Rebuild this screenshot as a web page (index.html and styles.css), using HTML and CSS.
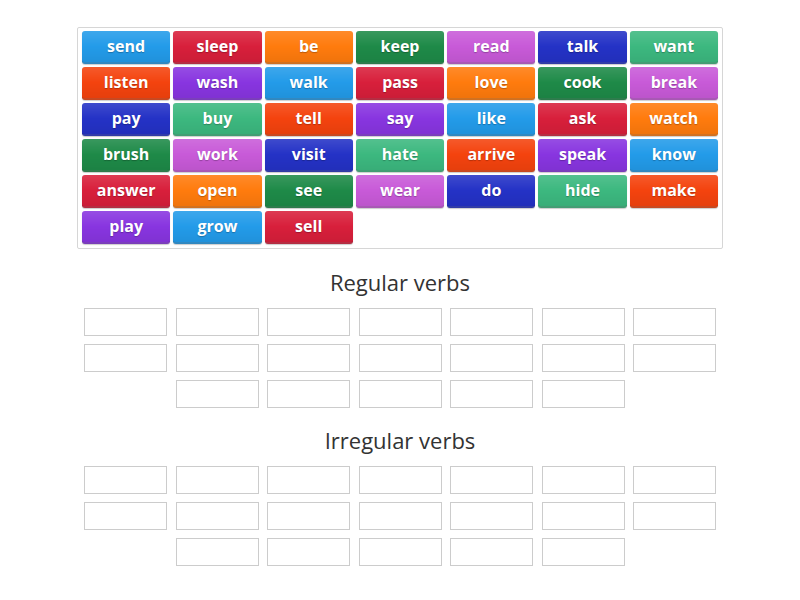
FILE: index.html
```html
<!DOCTYPE html>
<html>
<head>
<meta charset="utf-8">
<link rel="stylesheet" href="styles.css">
</head>
<body>
<div class="page">
  <div class="bank">
    <div class="tile c-blue">send</div>
    <div class="tile c-red">sleep</div>
    <div class="tile c-orange">be</div>
    <div class="tile c-green">keep</div>
    <div class="tile c-pink">read</div>
    <div class="tile c-navy">talk</div>
    <div class="tile c-teal">want</div>

    <div class="tile c-vermil">listen</div>
    <div class="tile c-purple">wash</div>
    <div class="tile c-blue">walk</div>
    <div class="tile c-red">pass</div>
    <div class="tile c-orange">love</div>
    <div class="tile c-green">cook</div>
    <div class="tile c-pink">break</div>

    <div class="tile c-navy">pay</div>
    <div class="tile c-teal">buy</div>
    <div class="tile c-vermil">tell</div>
    <div class="tile c-purple">say</div>
    <div class="tile c-blue">like</div>
    <div class="tile c-red">ask</div>
    <div class="tile c-orange">watch</div>

    <div class="tile c-green">brush</div>
    <div class="tile c-pink">work</div>
    <div class="tile c-navy">visit</div>
    <div class="tile c-teal">hate</div>
    <div class="tile c-vermil">arrive</div>
    <div class="tile c-purple">speak</div>
    <div class="tile c-blue">know</div>

    <div class="tile c-red">answer</div>
    <div class="tile c-orange">open</div>
    <div class="tile c-green">see</div>
    <div class="tile c-pink">wear</div>
    <div class="tile c-navy">do</div>
    <div class="tile c-teal">hide</div>
    <div class="tile c-vermil">make</div>

    <div class="tile c-purple">play</div>
    <div class="tile c-blue">grow</div>
    <div class="tile c-red">sell</div>
  </div>

  <div class="group group-first">
    <h2 class="group-title">Regular verbs</h2>
    <div class="slots">
      <div class="slot"></div><div class="slot"></div><div class="slot"></div><div class="slot"></div><div class="slot"></div><div class="slot"></div><div class="slot"></div>
      <div class="slot"></div><div class="slot"></div><div class="slot"></div><div class="slot"></div><div class="slot"></div><div class="slot"></div><div class="slot"></div>
      <div class="slot"></div><div class="slot"></div><div class="slot"></div><div class="slot"></div><div class="slot"></div>
    </div>
  </div>

  <div class="group">
    <h2 class="group-title">Irregular verbs</h2>
    <div class="slots">
      <div class="slot"></div><div class="slot"></div><div class="slot"></div><div class="slot"></div><div class="slot"></div><div class="slot"></div><div class="slot"></div>
      <div class="slot"></div><div class="slot"></div><div class="slot"></div><div class="slot"></div><div class="slot"></div><div class="slot"></div><div class="slot"></div>
      <div class="slot"></div><div class="slot"></div><div class="slot"></div><div class="slot"></div><div class="slot"></div>
    </div>
  </div>
</div>
</body>
</html>
```

FILE: styles.css
```css
html, body {
  margin: 0;
  padding: 0;
  background: #ffffff;
}

body {
  font-family: "Open Sans", "Liberation Sans", sans-serif;
}

.page {
  width: 800px;
  padding-top: 27px;
}

.bank {
  width: 646px;
  box-sizing: border-box;
  margin: 0 0 0 77px;
  border: 1px solid #d6d6d6;
  border-radius: 2px;
  padding: 3px 4px 4px 4px;
  display: grid;
  grid-template-columns: repeat(7, 1fr);
  column-gap: 3px;
  row-gap: 3px;
}

.tile {
  height: 33px;
  box-sizing: border-box;
  border-radius: 3px;
  color: #ffffff;
  font-weight: 700;
  font-size: 16px;
  line-height: 31px;
  text-align: center;
  text-shadow: 0 1px 1px rgba(0, 0, 0, 0.25);
  border-bottom: 2px solid rgba(0, 0, 0, 0.18);
  box-shadow: 0 1px 1px rgba(0, 0, 0, 0.2);
  background-image: linear-gradient(to bottom, rgba(255,255,255,0.12), rgba(255,255,255,0) 50%, rgba(0,0,0,0.06));
}

.c-blue   { background-color: #239be9; }
.c-red    { background-color: #d81f3b; }
.c-orange { background-color: #ff7b0d; }
.c-green  { background-color: #1e8a48; }
.c-pink   { background-color: #c85ad8; }
.c-navy   { background-color: #2432c6; }
.c-teal   { background-color: #3cb87f; }
.c-vermil { background-color: #f4430e; }
.c-purple { background-color: #8835e0; }

.group {
  margin-top: 18px;
}

.group-first {
  margin-top: 19px;
}

.group-title {
  margin: 0;
  font-weight: 400;
  font-size: 22px;
  line-height: 28px;
  color: #333333;
  text-align: center;
}

.slots {
  width: 632px;
  margin: 12px auto 0 auto;
  display: flex;
  flex-wrap: wrap;
  justify-content: center;
  column-gap: 8.5px;
  row-gap: 8px;
}

.slot {
  width: 83px;
  height: 28px;
  box-sizing: border-box;
  border: 1px solid #cccccc;
  background: #ffffff;
}
```
